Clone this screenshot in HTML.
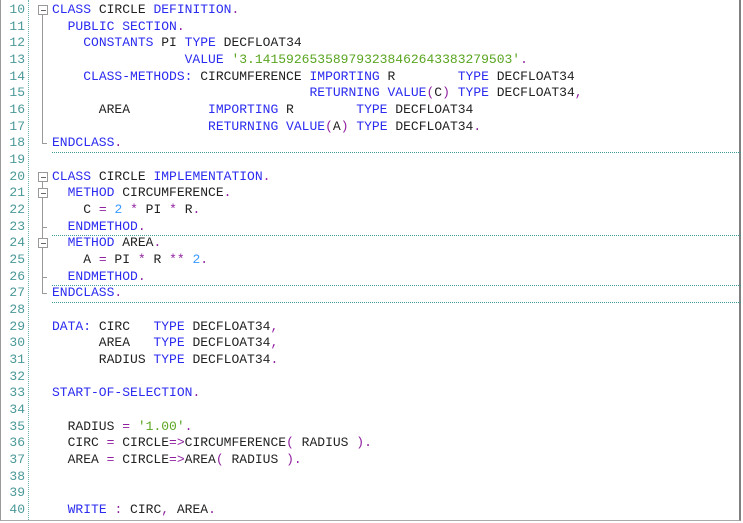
<!DOCTYPE html>
<html><head><meta charset="utf-8"><style>
html,body{margin:0;padding:0;background:#fff;}
body{width:743px;height:523px;position:relative;overflow:hidden;font-family:"Liberation Mono",monospace;font-size:13px;}
.frame{position:absolute;left:0;top:0;width:741px;height:521px;border-left:1px solid #9a9a9a;border-right:2px solid #808080;border-bottom:1px solid #aaa;box-sizing:border-box;}
.gut{position:absolute;left:28px;top:0;height:520px;border-left:1px dotted #6bb0b0;}
.ln{position:absolute;left:0;width:25px;text-align:right;color:#4a9898;height:16.67px;line-height:16.67px;}
.code{position:absolute;left:52px;white-space:pre;height:16.67px;line-height:16.67px;color:#222;}
.k{color:#2b2bf0}.p{color:#9020a0}.n{color:#3a9aff}.s{color:#5aa520}
.sep{position:absolute;left:52px;right:2px;border-top:1px dotted #3f9a9a;height:0;}
.box{position:absolute;width:8px;height:8px;border:1px solid #999;background:#fff;left:38px;}
.box:after{content:"";position:absolute;left:2px;top:4px;width:5px;height:1px;background:#666;}
.vl{position:absolute;border-left:1px solid #999;width:0;}
.tk{position:absolute;border-top:1px solid #999;width:5px;height:0;}
</style></head><body>
<div class="frame"></div>
<div class="gut"></div>
<div id="nums"></div>
<div class="code" style="top:2px"><span class="k">CLASS</span> CIRCLE <span class="k">DEFINITION</span><span class="p">.</span></div>
<div class="code" style="top:18.67px">  <span class="k">PUBLIC SECTION</span><span class="p">.</span></div>
<div class="code" style="top:35.33px">    <span class="k">CONSTANTS</span> PI <span class="k">TYPE</span> DECFLOAT34</div>
<div class="code" style="top:52px">                 <span class="k">VALUE</span> <span class="s">'3.141592653589793238462643383279503'</span><span class="p">.</span></div>
<div class="code" style="top:68.67px">    <span class="k">CLASS-METHODS:</span> CIRCUMFERENCE <span class="k">IMPORTING</span> R        <span class="k">TYPE</span> DECFLOAT34</div>
<div class="code" style="top:85.33px">                                 <span class="k">RETURNING VALUE</span><span class="p">(</span>C<span class="p">)</span> <span class="k">TYPE</span> DECFLOAT34<span class="p">,</span></div>
<div class="code" style="top:102px">      AREA          <span class="k">IMPORTING</span> R        <span class="k">TYPE</span> DECFLOAT34</div>
<div class="code" style="top:118.67px">                    <span class="k">RETURNING VALUE</span><span class="p">(</span>A<span class="p">)</span> <span class="k">TYPE</span> DECFLOAT34<span class="p">.</span></div>
<div class="code" style="top:135.33px"><span class="k">ENDCLASS</span><span class="p">.</span></div>
<div class="code" style="top:168.67px"><span class="k">CLASS</span> CIRCLE <span class="k">IMPLEMENTATION</span><span class="p">.</span></div>
<div class="code" style="top:185.33px">  <span class="k">METHOD</span> CIRCUMFERENCE<span class="p">.</span></div>
<div class="code" style="top:202px">    C <span class="p">=</span> <span class="n">2</span> <span class="p">*</span> PI <span class="p">*</span> R<span class="p">.</span></div>
<div class="code" style="top:218.67px">  <span class="k">ENDMETHOD</span><span class="p">.</span></div>
<div class="code" style="top:235.33px">  <span class="k">METHOD</span> AREA<span class="p">.</span></div>
<div class="code" style="top:252px">    A <span class="p">=</span> PI <span class="p">*</span> R <span class="p">**</span> <span class="n">2</span><span class="p">.</span></div>
<div class="code" style="top:268.67px">  <span class="k">ENDMETHOD</span><span class="p">.</span></div>
<div class="code" style="top:285.33px"><span class="k">ENDCLASS</span><span class="p">.</span></div>
<div class="code" style="top:318.67px"><span class="k">DATA:</span> CIRC   <span class="k">TYPE</span> DECFLOAT34<span class="p">,</span></div>
<div class="code" style="top:335.33px">      AREA   <span class="k">TYPE</span> DECFLOAT34<span class="p">,</span></div>
<div class="code" style="top:352px">      RADIUS <span class="k">TYPE</span> DECFLOAT34<span class="p">.</span></div>
<div class="code" style="top:385.33px"><span class="k">START-OF-SELECTION</span><span class="p">.</span></div>
<div class="code" style="top:418.67px">  RADIUS <span class="p">=</span> <span class="s">'1.00'</span><span class="p">.</span></div>
<div class="code" style="top:435.33px">  CIRC <span class="p">=</span> CIRCLE<span class="p">=&gt;</span>CIRCUMFERENCE<span class="p">(</span> RADIUS <span class="p">).</span></div>
<div class="code" style="top:452px">  AREA <span class="p">=</span> CIRCLE<span class="p">=&gt;</span>AREA<span class="p">(</span> RADIUS <span class="p">).</span></div>
<div class="code" style="top:502px">  <span class="k">WRITE</span> <span class="p">:</span> CIRC<span class="p">,</span> AREA<span class="p">.</span></div>
<div class="sep" style="top:152px"></div>
<div class="sep" style="top:235px"></div>
<div class="sep" style="top:285px"></div>
<div class="sep" style="top:302px"></div>
<div class="box" style="top:5px"></div>
<div class="vl" style="left:42px;top:15px;height:128px"></div><div class="tk" style="left:42px;top:143px"></div>
<div class="box" style="top:172px"></div>
<div class="vl" style="left:42px;top:182px;height:111px"></div><div class="tk" style="left:42px;top:293px"></div>
<div class="box" style="top:188px"></div>
<div class="tk" style="left:42px;top:227px"></div>
<div class="box" style="top:238px"></div>
<div class="tk" style="left:42px;top:277px"></div>
<script>
var h='';for(var i=10;i<=40;i++){h+='<div class="ln" style="top:'+(2+(i-10)*16.667)+'px">'+i+'</div>';}
document.getElementById('nums').innerHTML=h;
</script>
</body></html>
